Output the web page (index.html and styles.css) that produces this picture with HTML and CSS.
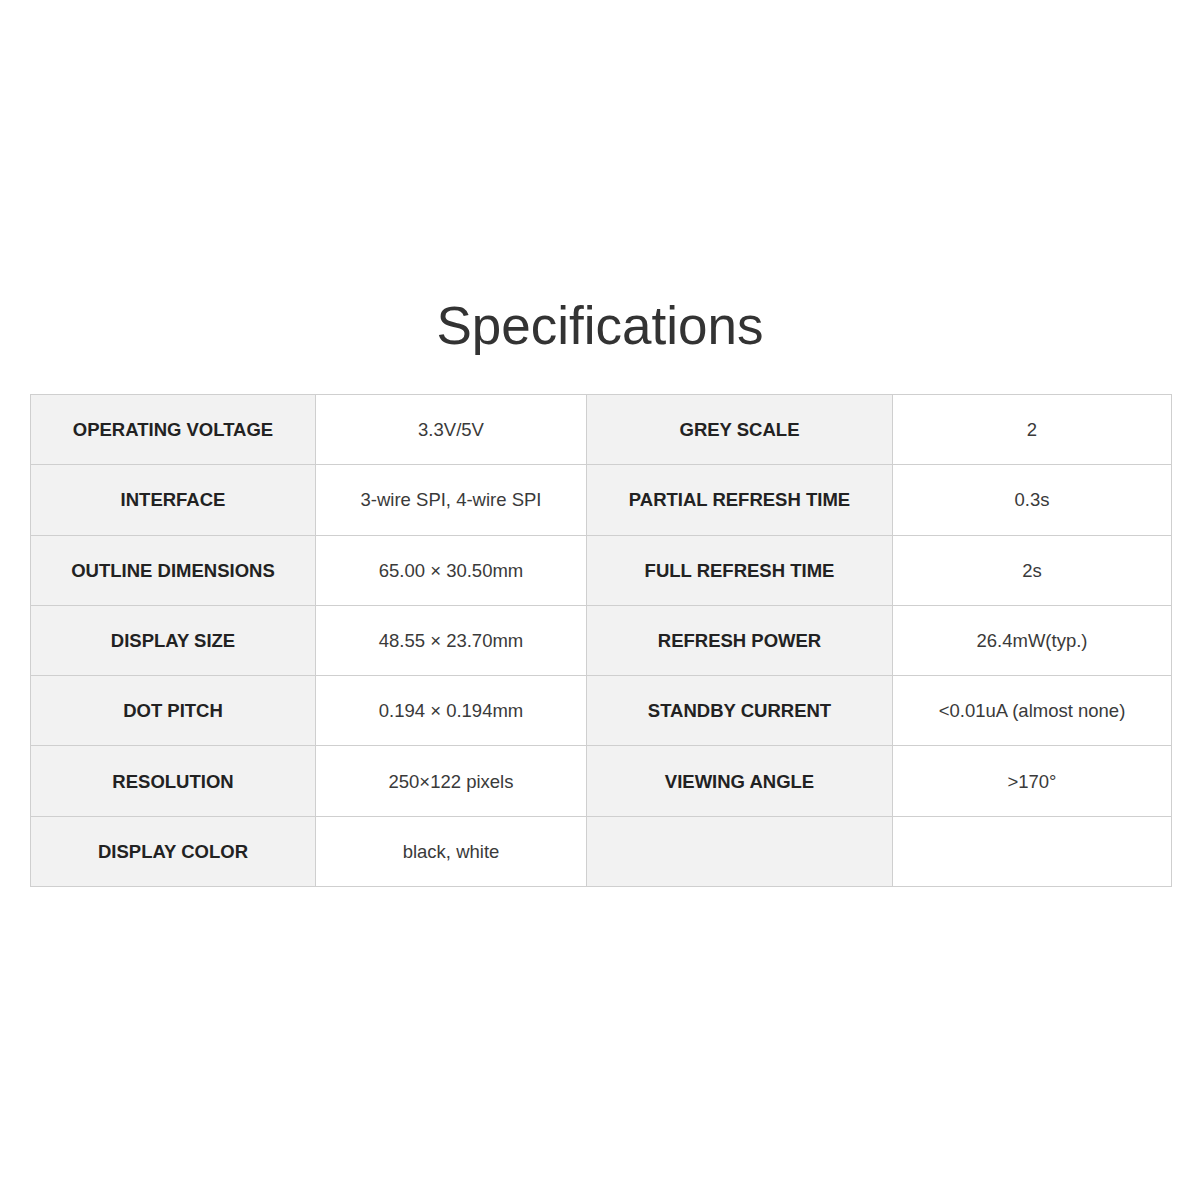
FILE: index.html
```html
<!DOCTYPE html>
<html>
<head>
<meta charset="utf-8">
<link rel="stylesheet" href="styles.css">
</head>
<body>
<div class="page">
  <h1 class="title">Specifications</h1>
  <table class="specs">
    <colgroup>
      <col class="c1"><col class="c2"><col class="c3"><col class="c4">
    </colgroup>
    <tr><th>OPERATING VOLTAGE</th><td>3.3V/5V</td><th>GREY SCALE</th><td>2</td></tr>
    <tr><th>INTERFACE</th><td>3-wire SPI, 4-wire SPI</td><th>PARTIAL REFRESH TIME</th><td>0.3s</td></tr>
    <tr><th>OUTLINE DIMENSIONS</th><td>65.00 × 30.50mm</td><th>FULL REFRESH TIME</th><td>2s</td></tr>
    <tr><th>DISPLAY SIZE</th><td>48.55 × 23.70mm</td><th>REFRESH POWER</th><td>26.4mW(typ.)</td></tr>
    <tr><th>DOT PITCH</th><td>0.194 × 0.194mm</td><th>STANDBY CURRENT</th><td>&lt;0.01uA (almost none)</td></tr>
    <tr><th>RESOLUTION</th><td>250×122 pixels</td><th>VIEWING ANGLE</th><td>&gt;170°</td></tr>
    <tr><th>DISPLAY COLOR</th><td>black, white</td><th></th><td></td></tr>
  </table>
</div>
</body>
</html>
```
FILE: styles.css
```css
html, body {
  margin: 0;
  padding: 0;
  background: #fff;
}
.page {
  width: 1200px;
  height: 1200px;
  padding-top: 294px;
  box-sizing: border-box;
  font-family: "Liberation Sans", Arial, sans-serif;
}
.title {
  margin: 0 0 36px 0;
  text-align: center;
  font-weight: normal;
  font-size: 53px;
  line-height: 64px;
  color: #333;
}
.specs {
  margin-left: 30px;
  width: 1141px;
  border-collapse: collapse;
  table-layout: fixed;
}
.c1 { width: 285px; }
.c2 { width: 271px; }
.c3 { width: 306px; }
.c4 { width: 279px; }
.specs th, .specs td {
  border: 1px solid #cfcfcf;
  height: 69.3px;
  padding: 1px 0 0 0;
  box-sizing: border-box;
  text-align: center;
  vertical-align: middle;
  font-size: 18.5px;
}
.specs tr { height: 70.3px; }
.specs th {
  background: #f2f2f2;
  color: #222;
  font-weight: bold;
}
.specs td {
  background: #fff;
  color: #3a3a3a;
  font-weight: normal;
}
```
